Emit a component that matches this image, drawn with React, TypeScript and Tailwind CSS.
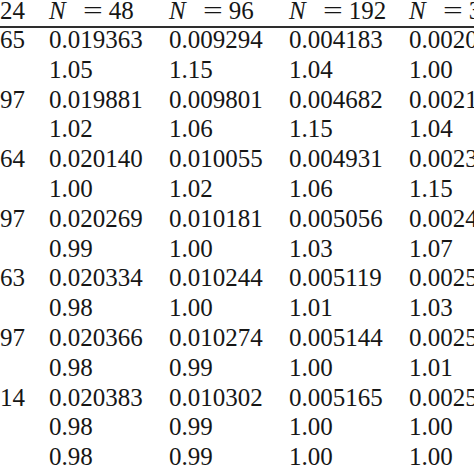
const header = ["48", "96", "192", "384"];

const rows: string[][] = [
  ["65", "0.019363", "0.009294", "0.004183", "0.0020"],
  ["", "1.05", "1.15", "1.04", "1.00"],
  ["97", "0.019881", "0.009801", "0.004682", "0.0021"],
  ["", "1.02", "1.06", "1.15", "1.04"],
  ["64", "0.020140", "0.010055", "0.004931", "0.0023"],
  ["", "1.00", "1.02", "1.06", "1.15"],
  ["97", "0.020269", "0.010181", "0.005056", "0.0024"],
  ["", "0.99", "1.00", "1.03", "1.07"],
  ["63", "0.020334", "0.010244", "0.005119", "0.0025"],
  ["", "0.98", "1.00", "1.01", "1.03"],
  ["97", "0.020366", "0.010274", "0.005144", "0.0025"],
  ["", "0.98", "0.99", "1.00", "1.01"],
  ["14", "0.020383", "0.010302", "0.005165", "0.0025"],
  ["", "0.98", "0.99", "1.00", "1.00"],
  ["", "0.98", "0.99", "1.00", "1.00"],
];

// TeX-style "N = n": italic N, wide equals sign, thick spaces
function MathN({ n }: { n: string }) {
  return (
    <span className="whitespace-nowrap">
      <i>N</i>
      <span className="ml-[17px] mr-[6px] inline-block w-[20px] scale-x-[1.4] text-center">=</span>
      {n}
    </span>
  );
}

export default function App() {
  return (
    <div className="h-[474px] w-[474px] overflow-hidden bg-white text-[25px] text-[#161616] [font-family:Liberation_Serif,serif]">
      {/* header row, cropped at the top */}
      <div className="-mt-[4px] grid h-[30px] grid-cols-[49px_120px_120px_120px_120px] leading-[30px]">
        <div className="pr-[30px] text-right">24</div>
        {header.map((n) => (
          <div key={n}>
            <MathN n={n} />
          </div>
        ))}
      </div>
      <div className="h-[2px] bg-[#2e2e2e]" />
      <div className="-mt-[3px] leading-[29.8px]">
        {rows.map((r, i) => (
          <div key={i} className="grid grid-cols-[49px_120px_120px_120px_120px]">
            <div className="pr-[25px] text-right">{r[0]}</div>
            <div>{r[1]}</div>
            <div>{r[2]}</div>
            <div>{r[3]}</div>
            <div className="whitespace-nowrap">{r[4]}</div>
          </div>
        ))}
      </div>
    </div>
  );
}
